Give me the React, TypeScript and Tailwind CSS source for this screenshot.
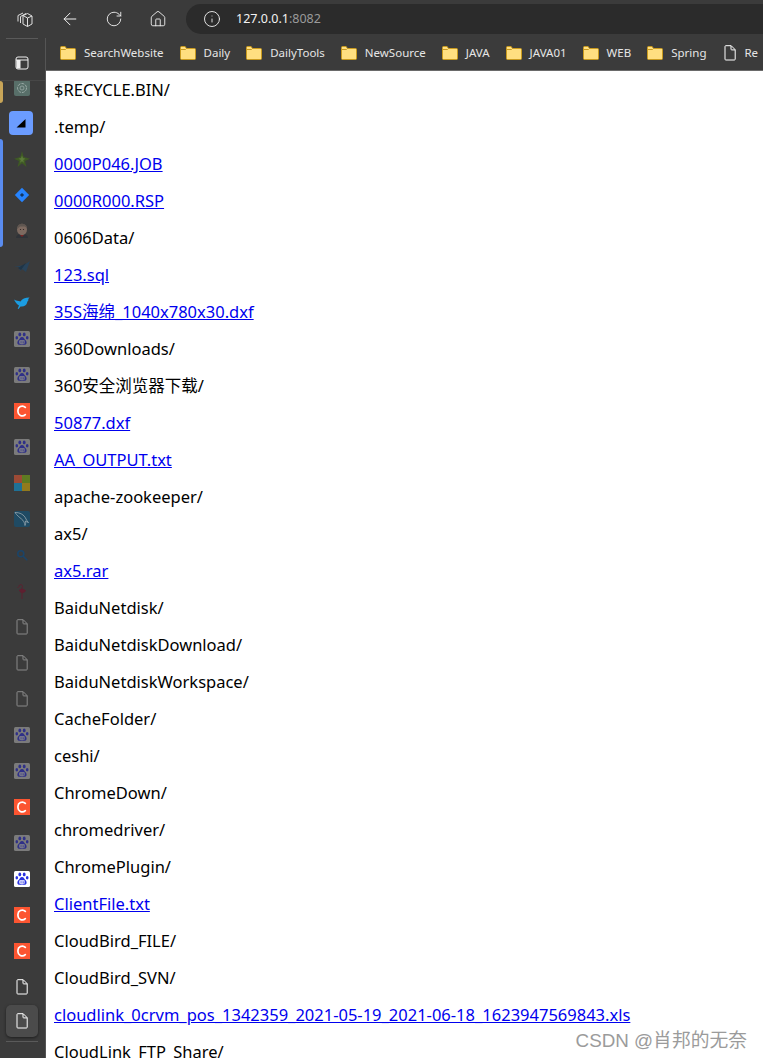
import React from 'react';
import { ArrowLeft, RotateCw, Home, Info } from 'lucide-react';

type Row = { name: string; link?: boolean };

const rows: Row[] = [
  { name: '$RECYCLE.BIN/' },
  { name: '.temp/' },
  { name: '0000P046.JOB', link: true },
  { name: '0000R000.RSP', link: true },
  { name: '0606Data/' },
  { name: '123.sql', link: true },
  { name: '35S海绵_1040x780x30.dxf', link: true },
  { name: '360Downloads/' },
  { name: '360安全浏览器下载/' },
  { name: '50877.dxf', link: true },
  { name: 'AA_OUTPUT.txt', link: true },
  { name: 'apache-zookeeper/' },
  { name: 'ax5/' },
  { name: 'ax5.rar', link: true },
  { name: 'BaiduNetdisk/' },
  { name: 'BaiduNetdiskDownload/' },
  { name: 'BaiduNetdiskWorkspace/' },
  { name: 'CacheFolder/' },
  { name: 'ceshi/' },
  { name: 'ChromeDown/' },
  { name: 'chromedriver/' },
  { name: 'ChromePlugin/' },
  { name: 'ClientFile.txt', link: true },
  { name: 'CloudBird_FILE/' },
  { name: 'CloudBird_SVN/' },
  { name: 'cloudlink_0crvm_pos_1342359_2021-05-19_2021-06-18_1623947569843.xls', link: true },
  { name: 'CloudLink_FTP_Share/' },
];

const bookmarks = ['SearchWebsite', 'Daily', 'DailyTools', 'NewSource', 'JAVA', 'JAVA01', 'WEB', 'Spring'];

function Folder() {
  return (
    <svg width="16" height="16" viewBox="0 0 16 16" className="shrink-0">
      <path d="M0.500 2.500a1 1 0 0 1 1-1h3.600l1.400 2h8a1 1 0 0 1 1 1v9a1 1 0 0 1-1 1h-13a1 1 0 0 1-1-1z" fill="#ffdf80" stroke="#c99a1e" />
      <path d="M1 4.500h4.500l1-1" fill="none" stroke="#c99a1e" />
    </svg>
  );
}

function Doc({ color = '#ffffff', dim = false }: { color?: string; dim?: boolean }) {
  return (
    <svg width="16" height="16" viewBox="0 0 16 16" fill="none" stroke={color} strokeWidth="1" className={dim ? 'opacity-40' : ''}>
      <path d="M3 1.500a.8.8 0 0 1 .8-.8h5.400l4 4v9.500a.8.8 0 0 1-.8.8H3.800a.8.8 0 0 1-.8-.8z" />
      <path d="M9 .9v3.300a.7.7 0 0 0 .7.7h3.300" />
    </svg>
  );
}

function Baidu({ bright = false }: { bright?: boolean }) {
  const paw = bright ? '#2932e1' : '#2f3088';
  const inner = bright ? '#ffffff' : '#8a8a8a';
  return (
    <svg width="16" height="16" viewBox="0 0 16 16">
      <rect width="16" height="16" rx="1.500" fill={bright ? '#ffffff' : '#7b7b7b'} />
      <ellipse cx="5.800" cy="3.400" rx="1.400" ry="1.900" fill={paw} />
      <ellipse cx="10.200" cy="3.400" rx="1.400" ry="1.900" fill={paw} />
      <ellipse cx="2.800" cy="6.800" rx="1.300" ry="1.800" fill={paw} />
      <ellipse cx="13.200" cy="6.800" rx="1.300" ry="1.800" fill={paw} />
      <path d="M8 6c-2 0-2.200 2-3.600 3.200C3 10.500 2.800 13.800 5.600 13.800c1 0 1.500-.3 2.400-.3s1.400.3 2.400.3c2.800 0 2.600-3.300 1.200-4.600C10.200 8 10 6 8 6z" fill={paw} />
      <rect x="5.300" y="9.300" width="5.400" height="3.400" rx=".6" fill={inner} />
      <path d="M6.800 10.200v1.700M7.800 10.300v1.500M9 10.300v1.200q0 .5.400.5t.4-.5v-1.200" stroke={paw} strokeWidth=".6" fill="none" />
    </svg>
  );
}

function Csdn() {
  return (
    <div className="w-4 h-4 bg-[#fc5531] flex items-center justify-center">
      <svg width="12" height="12" viewBox="0 0 12 12" fill="none" stroke="#ffffff" strokeWidth="1.700" strokeLinecap="round">
        <path d="M9.300 2.400A4.300 4.300 0 0 0 2 6a4.300 4.300 0 0 0 7.300 3.600" />
      </svg>
    </div>
  );
}

function Gpt() {
  return (
    <svg width="16" height="16" viewBox="0 0 16 16">
      <rect width="16" height="16" rx="2" fill="#586f69" />
      <circle cx="8" cy="8" r="4.500" fill="none" stroke="#9aaaa6" strokeWidth="1" strokeDasharray="3 1" />
      <circle cx="8" cy="8" r="2" fill="none" stroke="#9aaaa6" strokeWidth=".8" />
    </svg>
  );
}

function Notch() {
  return (
    <div className="w-6 h-6 -ml-[2px] rounded-[4px] bg-[#6b9cff] flex items-center justify-center">
      <svg width="12" height="12" viewBox="0 0 12 12">
        <path d="M1.500 10.500 9 3.500 10.500 2v8.500z" fill="#000000" />
      </svg>
    </div>
  );
}

function Star() {
  return (
    <svg width="16" height="16" viewBox="0 0 16 16">
      <path d="M8 0l1.700 6 6.300 1.800-5 2.200 1.500 6L8 12.200 3.500 16 5 10 0 7.800 6.300 6z" fill="#3f5a24" />
      <path d="M8 4.500 9 7l2.500.8L9.300 9l.6 2.700L8 10.300 6 11.700 6.700 9 4.500 7.800 7 7z" fill="#5c7a3a" />
    </svg>
  );
}

function Diamond() {
  return (
    <svg width="16" height="16" viewBox="0 0 16 16">
      <path d="M8 .8 15.200 8 8 15.200.8 8z" fill="#2684ff" />
      <rect x="6.500" y="6.500" width="3" height="3" transform="rotate(45 8 8)" fill="#12345f" />
    </svg>
  );
}

function Butler() {
  return (
    <svg width="16" height="16" viewBox="0 0 16 16">
      <path d="M2 15c.5-3 2-4 6-4s5.500 1 6 4z" fill="#2f3338" />
      <ellipse cx="8" cy="6.500" rx="5" ry="5.800" fill="#7d6a60" />
      <path d="M3 6C3 2 6 .8 8 .8s5 1 5 4.200L11 3.500H6z" fill="#5f5650" />
      <path d="M6 12h4l-2 2z" fill="#7a2525" />
      <circle cx="6.500" cy="6.500" r=".6" fill="#2d2320" />
      <circle cx="9.500" cy="6.500" r=".6" fill="#2d2320" />
    </svg>
  );
}

function DarkBird() {
  return (
    <svg width="16" height="16" viewBox="0 0 16 16">
      <path d="M0 8l10-2 6-4-4 11-4-3-2 2-1-4z" fill="#28435a" />
      <path d="M4 9l8-5-5 7z" fill="#1f3547" />
    </svg>
  );
}

function BlueBird() {
  return (
    <svg width="16" height="16" viewBox="0 0 16 16">
      <path d="M0 4.500c2 1 4 1.500 6.500 2C8 4 11 2.500 15.500 2.500c-.8 1-1.200 1.500-1.700 2l1.200.3c-1.500 1-1.500 1.800-2 3.200-.8 2.500-3 4-6.500 3.500L4.500 14l-.8-.2L5 10.600C3 9.500 1 7 0 4.500z" fill="#1b9de2" />
    </svg>
  );
}

function Windows() {
  return (
    <div className="w-4 h-4 grid grid-cols-2">
      <div className="bg-[#9c4a35]" />
      <div className="bg-[#5e7a22]" />
      <div className="bg-[#1f7196]" />
      <div className="bg-[#927a1d]" />
    </div>
  );
}

function Mysql() {
  return (
    <svg width="16" height="16" viewBox="0 0 16 16">
      <rect width="16" height="16" rx="2" fill="#1f4a63" />
      <path d="M1 1.500c5 0 9 2 11 6.500.6 1.500 1.500 2.500 2.500 3.500-1.300-.3-2.300-.8-3-1.500.3 1.700.2 3.200-.5 4.500-.3-2.800-1.500-5-3.500-6.500C5.500 6.300 3 4.500 1 1.500z" fill="none" stroke="#a9b4ba" strokeWidth=".7" />
    </svg>
  );
}

function Search() {
  return (
    <svg width="12" height="12" viewBox="0 0 12 12" fill="none" stroke="#1b4468" strokeWidth="1.600">
      <circle cx="4.800" cy="4.800" r="3" />
      <path d="M7.200 7.200 10.800 10.800" strokeLinecap="round" />
    </svg>
  );
}

function Flamingo() {
  return (
    <svg width="16" height="16" viewBox="0 0 16 16" fill="none" stroke="#5e2030" strokeWidth="1">
      <path d="M5 3.500c0-2.500 3.500-2.500 3.500 0 0 1.500-2 2.500-1 4" />
      <path d="M5.500 7c2-1.500 5-1 6 1-2 2-4.500 2-5.500.5z" fill="#5e2030" />
      <path d="M8 9.500V16" />
      <path d="M5 3.500 3.500 5" />
    </svg>
  );
}

// 사이드바 탭 목록 (위에서 아래 순서)
const tabs: React.ReactNode[] = [
  <Notch />, <Star />, <Diamond />, <Butler />, <DarkBird />, <BlueBird />,
  <Baidu />, <Baidu />, <Csdn />, <Baidu />, <Windows />, <Mysql />, <Search />, <Flamingo />,
  <Doc dim />, <Doc dim />, <Doc dim />,
  <Baidu />, <Baidu />, <Csdn />, <Baidu />, <Baidu bright />, <Csdn />, <Csdn />,
  <Doc />,
];

export default function App() {
  return (
    <div className="relative w-[763px] h-[1058px] overflow-hidden bg-white flex flex-col font-['Noto_Sans','Noto_Sans_CJK_SC',sans-serif]">
      {/* 상단 주소창 */}
      <div className="h-[38px] shrink-0 bg-[#3b3b3b] flex items-center text-[#f2f2f2]">
        <div className="w-[50px] flex justify-center">
          <svg width="18" height="18" viewBox="0 0 18 18" fill="none" stroke="#e0e0e0" strokeWidth="1" strokeLinejoin="round">
            <path d="M2 11.500V5.500l5-2.500" />
            <path d="M4.500 13V6.500l5.500-3" />
            <path d="M7 5.500l4.500-2 4.500 2.500v8l-4.500 2.500L7 14z" />
            <path d="M7 5.500l4.500 2.500V16.500M11.500 8 16 6" />
          </svg>
        </div>
        <div className="w-[40px] flex justify-center">
          <ArrowLeft size={20} strokeWidth={1.2} />
        </div>
        <div className="w-[48px] flex justify-center">
          <RotateCw size={18} strokeWidth={1.2} />
        </div>
        <div className="w-[40px] flex justify-center">
          <Home size={18} strokeWidth={1.2} />
        </div>
        <div className="ml-2 flex-1 h-[30px] mb-[5px] mt-[4px] rounded-l-full bg-[#2b2b2b] flex items-center pl-[17px] mr-[-10px]">
          <Info size={18} strokeWidth={1.2} />
          <span className="ml-[15px] pt-px text-[12.500px] font-['Noto_Sans',sans-serif]">
            127.0.0.1<span className="text-[#9a9a9a]">:8082</span>
          </span>
        </div>
      </div>

      <div className="flex-1 flex min-h-0">
        {/* 왼쪽 세로 탭 */}
        <div className="relative w-[46px] shrink-0 bg-[#3b3b3b] border-r border-[#555555] flex flex-col">
          <div className="h-[43px] shrink-0 flex flex-col items-center border-b border-[#474747]">
            <div className="w-[32px] h-px bg-[#5a5a5a] mr-[1px]" />
            <div className="mt-[16px] mr-[2px]">
              <svg width="16" height="16" viewBox="0 0 16 16" fill="none" stroke="#f0f0f0" strokeWidth="1">
                <rect x="2" y="2" width="12" height="12" rx="2" />
                <path d="M2 5h12" />
                <rect x="2.500" y="5" width="4" height="8.500" fill="#f0f0f0" stroke="none" />
              </svg>
            </div>
          </div>
          <div className="flex-1 min-h-0 overflow-hidden flex flex-col items-center pr-[1px]">
            <div className="h-[24px] shrink-0">
              <div className="h-[15px] overflow-hidden flex items-end">
                <Gpt />
              </div>
            </div>
            {tabs.map((t, i) => (
              <div key={i} className="h-9 w-full shrink-0 flex items-center justify-center">
                {t}
              </div>
            ))}
            <div className="w-8 h-8 shrink-0 rounded-[5px] bg-[#4b4b4b] shadow-[0_1px_3px_rgba(0,0,0,0.5)] flex items-center justify-center">
              <Doc />
            </div>
            <div className="w-8 h-px mt-[4px] shrink-0 bg-[#5a5a5a]" />
          </div>
          {/* 탭 그룹 색상 표시 */}
          <div className="absolute left-0 top-[43px] w-[3px] h-[22px] rounded-r-sm bg-[#c8a558]" />
          <div className="absolute left-0 top-[101px] w-[3px] h-[108px] rounded-r-sm bg-[#5a8cf0]" />
        </div>

        <div className="flex-1 min-w-0 flex flex-col">
          {/* 북마크 바 */}
          <div className="h-[33px] shrink-0 bg-[#3b3b3b] border-b border-[#6a6a6a] flex items-center pl-[14px] pb-[3px] gap-4 whitespace-nowrap text-[11.500px] text-[#e6e6e6]">
            {bookmarks.map((b) => (
              <div key={b} className="flex items-center gap-2">
                <Folder />
                <span>{b}</span>
              </div>
            ))}
            <div className="flex items-center gap-[6px]">
              <Doc />
              <span>Re</span>
            </div>
          </div>
          {/* 파일 목록 */}
          <div className="flex-1 min-h-0 overflow-hidden pt-2 pl-2 flex flex-col gap-4 text-[16.500px] leading-[21px] text-black whitespace-nowrap">
            {rows.map((r) =>
              r.link ? (
                <a key={r.name} href="#" className="text-[#0000ee] underline self-start">
                  {r.name}
                </a>
              ) : (
                <p key={r.name}>{r.name}</p>
              ),
            )}
          </div>
        </div>
      </div>

      {/* 워터마크 */}
      <div className="absolute right-[16px] bottom-[5px] text-[18.800px] leading-[24px] text-[#9b9b9b] whitespace-nowrap font-['Liberation_Sans','Noto_Sans_CJK_SC',sans-serif] [text-shadow:0_0_2px_#ffffff]">
        CSDN @肖邦的无奈
      </div>
    </div>
  );
}
